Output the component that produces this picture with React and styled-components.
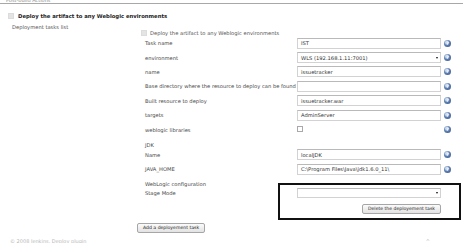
import React from "react";
import styled, { createGlobalStyle } from "styled-components";

const Global = createGlobalStyle`
  html, body { margin: 0; padding: 0; background: #fff; }
  body { font-family: "DejaVu Sans", Verdana, sans-serif; }
`;

const Page = styled.div`
  position: relative;
  width: 474px;
  height: 243px;
  overflow: hidden;
  background: #fff;
  color: #3a3a3a;
  font-size: 5.2px;
  font-family: "DejaVu Sans", Verdana, sans-serif;
`;

const SectionTitle = styled.div`
  margin-top: -3px;
  width: 457px;
  padding-left: 6px;
  height: 6px;
  line-height: 6px;
  font-size: 5px;
  color: #8a8a8a;
  border-bottom: 1px solid #a8a8a8;
`;

const OptionRow = styled.div`
  display: flex;
  align-items: center;
  gap: ${(p) => p.$gap || 4}px;
  height: 6px;
  margin-top: ${(p) => p.$top || 0}px;
  padding-left: ${(p) => p.$indent || 0}px;
`;

const Check = styled.span`
  display: inline-block;
  box-sizing: border-box;
  width: 6px;
  height: 6px;
  background: ${(p) => (p.$white ? "#fff" : "#e4e4e4")};
  border: 1px solid ${(p) => (p.$white ? "#a9a9a9" : "#dcdcdc")};
`;

const BoldTitle = styled.span`
  font-weight: bold;
  font-size: 5.3px;
  color: #222;
  white-space: nowrap;
`;

const Plain = styled.span`
  white-space: nowrap;
  color: #555;
`;

const TasksGrid = styled.div`
  display: grid;
  grid-template-columns: 137px 1fr;
  margin-top: 4px;
`;

const TasksLabel = styled.div`
  padding-left: 12px;
  line-height: 8px;
  color: #555;
  white-space: nowrap;
`;

const TasksBody = styled.div`
  padding-top: 7px;
`;

const FormRow = styled.div`
  display: grid;
  grid-template-columns: 152px 144px 11px;
  align-items: center;
  height: ${(p) => p.$h || 14.4}px;
  padding-left: 8px;
  margin-top: ${(p) => p.$top || 0}px;
`;

const Label = styled.div`
  white-space: nowrap;
  color: #484848;
`;

const TextBox = styled.div`
  box-sizing: border-box;
  height: ${(p) => p.$h || 11}px;
  border: 1px solid #d2d2d2;
  border-top-color: #b9b9b9;
  background: #fff;
  padding: 0 3px;
  display: flex;
  align-items: center;
  color: #333;
  white-space: nowrap;
  overflow: hidden;
`;

const SelectBox = styled(TextBox)`
  justify-content: space-between;
  padding-right: 2px;
`;

const Arrow = styled.span`
  width: 0;
  height: 0;
  border-left: 1.5px solid transparent;
  border-right: 1.5px solid transparent;
  border-top: 2px solid #111;
`;

const Help = styled.span`
  justify-self: end;
  margin-right: 1px;
  width: 7px;
  height: 7px;
  border-radius: 50%;
  background: radial-gradient(circle at 40% 35%, #c9d6ea 0 20%, #5d7fb3 45%, #2f4f86 100%);
  color: #fff;
  font-size: 4.5px;
  line-height: 7px;
  text-align: center;
  font-weight: bold;
`;

const ButtonLine = styled.div`
  display: flex;
  justify-content: ${(p) => (p.$end ? "flex-end" : "flex-start")};
  margin-top: ${(p) => p.$top || 0}px;
  padding-left: ${(p) => p.$indent || 0}px;
  width: ${(p) => p.$w || "auto"};
`;

const Button = styled.button`
  box-sizing: border-box;
  height: 10px;
  padding: 0 5px;
  font-family: "DejaVu Sans", Verdana, sans-serif;
  font-size: 4.6px;
  color: #222;
  background: linear-gradient(#fbfbfb, #e2e2e2);
  border: 1px solid #a6a6a6;
  border-radius: 2px;
  white-space: nowrap;
`;

const Highlight = styled.div`
  position: absolute;
  left: 278px;
  top: 183px;
  width: 183px;
  height: 37px;
  box-sizing: border-box;
  border: 2px solid #111;
  pointer-events: none;
`;

const Footer = styled.div`
  display: flex;
  justify-content: space-between;
  margin-top: 5px;
  padding: 0 44px 0 10px;
  color: #b8b8b8;
  font-size: 5px;
  line-height: 6px;
`;

const Fields = [
  { label: "Task name", value: "IST" },
  { label: "environment", value: "WLS (192.168.1.11:7001)", select: true },
  { label: "name", value: "issuetracker" },
  { label: "Base directory where the resource to deploy can be found", value: "" },
  { label: "Built resource to deploy", value: "issuetracker.war" },
  { label: "targets", value: "AdminServer" },
];

function Field({ label, value, select }) {
  return (
    <FormRow>
      <Label>{label}</Label>
      {select ? (
        <SelectBox>
          <span>{value}</span>
          <Arrow />
        </SelectBox>
      ) : (
        <TextBox>{value}</TextBox>
      )}
      <Help>?</Help>
    </FormRow>
  );
}

export default function App() {
  return (
    <Page>
      <Global />
      <SectionTitle>Post-build Actions</SectionTitle>
      <OptionRow $top={9} $indent={8}>
        <Check />
        <BoldTitle>Deploy the artifact to any Weblogic environments</BoldTitle>
      </OptionRow>
      <TasksGrid>
        <TasksLabel>Deployment tasks list</TasksLabel>
        <TasksBody>
          <OptionRow $indent={4} $gap={3}>
            <Check />
            <Plain>Deploy the artifact to any Weblogic environments</Plain>
          </OptionRow>
          {Fields.map((f) => (
            <Field key={f.label} {...f} />
          ))}
          <FormRow>
            <Label>weblogic libraries</Label>
            <div>
              <Check $white />
            </div>
            <Help>?</Help>
          </FormRow>
          <FormRow $h={6} $top={5}>
            <Label>JDK</Label>
          </FormRow>
          <Field label="Name" value="localJDK" />
          <Field label="JAVA_HOME" value="C:\Program Files\Java\jdk1.6.0_11\" />
          <FormRow $h={6} $top={4.4}>
            <Label>WebLogic configuration</Label>
          </FormRow>
          <FormRow $h={12}>
            <Label>Stage Mode</Label>
            <SelectBox $h={10}>
              <span />
              <Arrow />
            </SelectBox>
          </FormRow>
          <ButtonLine $end $top={5} $w="304px">
            <Button>Delete the deployement task</Button>
          </ButtonLine>
          <ButtonLine $top={9}>
            <Button>Add a deployement task</Button>
          </ButtonLine>
        </TasksBody>
      </TasksGrid>
      <Footer>
        <span>© 2008 Jenkins. Deploy plugin</span>
        <span>^</span>
      </Footer>
      <Highlight />
    </Page>
  );
}
